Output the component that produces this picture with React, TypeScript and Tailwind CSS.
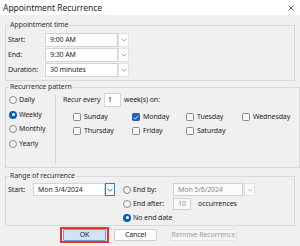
import React from "react";

const Chevron = ({ color = "#8a8a8a" }: { color?: string }) => (
  <svg width="6" height="4" viewBox="0 0 6 4">
    <polyline points="0.5,0.7 3,3.2 5.5,0.7" fill="none" stroke={color} strokeWidth="0.8" />
  </svg>
);

function Radio({ checked }: { checked?: boolean }) {
  return checked ? (
    <span className="w-[8px] h-[8px] shrink-0 rounded-full bg-[#005fb8] flex items-center justify-center">
      <span className="w-[3px] h-[3px] rounded-full bg-white" />
    </span>
  ) : (
    <span className="w-[8px] h-[8px] shrink-0 rounded-full border border-[#8a8a8a] bg-[#f6f6f6]" />
  );
}

function Check({ checked }: { checked?: boolean }) {
  return checked ? (
    <span className="w-[8px] h-[8px] shrink-0 rounded-[1.5px] bg-[#1a66c2] flex items-center justify-center">
      <svg width="6" height="5" viewBox="0 0 6 5">
        <polyline points="0.8,2.6 2.3,4 5.2,0.9" fill="none" stroke="white" strokeWidth="0.9" />
      </svg>
    </span>
  ) : (
    <span className="w-[8px] h-[8px] shrink-0 rounded-[1.5px] border border-[#8a8a8a] bg-[#f6f6f6]" />
  );
}

function Day({ label, checked, w }: { label: string; checked?: boolean; w: string }) {
  return (
    <div className={"flex items-center gap-[3px] " + w}>
      <Check checked={checked} />
      <span>{label}</span>
    </div>
  );
}

export default function App() {
  return (
    <div className="w-[300px] h-[246px] overflow-hidden whitespace-nowrap bg-[#f0f0f0] font-['Noto_Sans',sans-serif] text-[7px] tracking-[-0.1px] leading-[8px] text-[#1f1f1f] flex flex-col">
      {/* Title bar */}
      <div className="h-[15px] shrink-0 bg-white flex items-center justify-between pl-[3px] pr-[6px]">
        <span className="text-[8.5px] tracking-[-0.05px]">Appointment Recurrence</span>
        <svg width="6" height="6" viewBox="0 0 6 6">
          <path d="M0.5 0.5 L5.5 5.5 M5.5 0.5 L0.5 5.5" stroke="#333" strokeWidth="0.8" />
        </svg>
      </div>

      {/* Appointment time */}
      <fieldset className="mx-[5px] mt-[6px] h-[60px] shrink-0 border border-[#d9d9d9] px-[2px]">
        <legend className="ml-[1px] px-[1px] leading-[8px] text-[#333]">Appointment time</legend>
        <div className="mt-[4px] flex flex-col gap-[1px]">
          {[
            ["Start:", "9:00 AM"],
            ["End:", "9:30 AM"],
            ["Duration:", "30 minutes"],
          ].map(([l, v]) => (
            <div key={l} className="flex items-center h-[14px]">
              <span className="w-[37px]">{l}</span>
              <div className="flex h-full">
                <div className="w-[73px] flex items-center border border-[#d4d4d4] bg-white pl-[4px]">{v}</div>
                <div className="w-[11px] flex items-center justify-center border border-[#e2e2e2] bg-white">
                  <Chevron />
                </div>
              </div>
            </div>
          ))}
        </div>
      </fieldset>

      {/* Recurrence pattern */}
      <fieldset className="mx-[5px] mt-[2px] h-[85px] shrink-0 border border-[#d9d9d9] px-[2px]">
        <legend className="ml-[1px] px-[1px] leading-[8px] text-[#333]">Recurrence pattern</legend>
        <div className="flex h-[75px]">
          <div className="w-[47px] pt-[2px] pl-[1px] flex flex-col">
            {[
              ["Daily", false],
              ["Weekly", true],
              ["Monthly", false],
              ["Yearly", false],
            ].map(([l, c]) => (
              <div key={l as string} className="h-[14.5px] flex items-center gap-[2px]">
                <Radio checked={c as boolean} />
                <span>{l as string}</span>
              </div>
            ))}
          </div>
          <div className="w-[1px] bg-[#d6d6d6] mt-[3px] mb-[2px]" />
          <div className="flex-1 pl-[7px] pt-[2px]">
            <div className="flex items-center h-[14px]">
              <span className="w-[41px]">Recur every</span>
              <div className="w-[17px] h-full flex items-center border border-[#d4d4d4] bg-white pl-[3px]">1</div>
              <span className="ml-[3px]">week(s) on:</span>
            </div>
            <div className="mt-[4px] pl-[10px] flex flex-col gap-[2px]">
              <div className="flex items-center h-[12px]">
                <Day label="Sunday" w="w-[59px]" />
                <Day label="Monday" checked w="w-[54px]" />
                <Day label="Tuesday" w="w-[56px]" />
                <Day label="Wednesday" w="w-[55px]" />
              </div>
              <div className="flex items-center h-[12px]">
                <Day label="Thursday" w="w-[59px]" />
                <Day label="Friday" w="w-[54px]" />
                <Day label="Saturday" w="w-[56px]" />
              </div>
            </div>
          </div>
        </div>
      </fieldset>

      {/* Range of recurrence */}
      <fieldset className="mx-[5px] mt-[4px] h-[54px] shrink-0 border border-[#d9d9d9] px-[2px]">
        <legend className="ml-[1px] px-[1px] leading-[8px] text-[#333]">Range of recurrence</legend>
        <div className="mt-[3px] flex">
          <div className="flex items-center h-[13px]">
            <span className="w-[25px]">Start:</span>
            <div className="flex h-full">
              <div className="w-[72px] flex items-center border border-[#d4d4d4] bg-white pl-[4px]">Mon 3/4/2024</div>
              <div className="w-[10px] flex items-center justify-center border border-[#2f7fd0] bg-[#f4f9fd]">
                <Chevron color="#4a4a4a" />
              </div>
            </div>
          </div>
          <div className="ml-[8px] flex flex-col gap-[1px]">
            <div className="flex items-center h-[13px]">
              <Radio />
              <span className="ml-[2px] w-[40px]">End by:</span>
              <div className="flex h-full">
                <div className="w-[70px] flex items-center border border-[#cfcfcf] bg-[#fbfbfb] pl-[4px] text-[#8c8c8c]">Mon 5/6/2024</div>
                <div className="ml-[1px] w-[11px] flex items-center justify-center border border-[#e2e2e2] bg-[#fbfbfb]">
                  <Chevron color="#a8a8a8" />
                </div>
              </div>
            </div>
            <div className="flex items-center h-[13px]">
              <Radio />
              <span className="ml-[2px] w-[40px]">End after:</span>
              <div className="w-[18px] h-[12px] flex items-center border border-[#cfcfcf] bg-[#fbfbfb] pl-[4px] text-[#8c8c8c]">10</div>
              <span className="ml-[7px]">occurrences</span>
            </div>
            <div className="flex items-center h-[13px]">
              <Radio checked />
              <span className="ml-[2px]">No end date</span>
            </div>
          </div>
        </div>
      </fieldset>

      {/* Buttons */}
      <div className="mt-[1px] pl-[60px] flex items-center h-[16px]">
        <div className="border-2 border-[#e5322b] px-[1px] flex items-center">
          <div className="w-[43px] h-[12px] flex items-center justify-center bg-[#cfe4f7] border border-[#6f9fd3] rounded-[1px]">OK</div>
        </div>
        <div className="ml-[5px] w-[43px] h-[12px] flex items-center justify-center bg-[#fdfdfd] border border-[#d0d0d0] rounded-[1px]">Cancel</div>
        <div className="ml-[13px] w-[67px] h-[12px] flex items-center justify-center bg-[#f5f5f5] border border-[#e3e3e3] rounded-[1px] text-[#a0a0a0]">Remove Recurrence</div>
      </div>
    </div>
  );
}
